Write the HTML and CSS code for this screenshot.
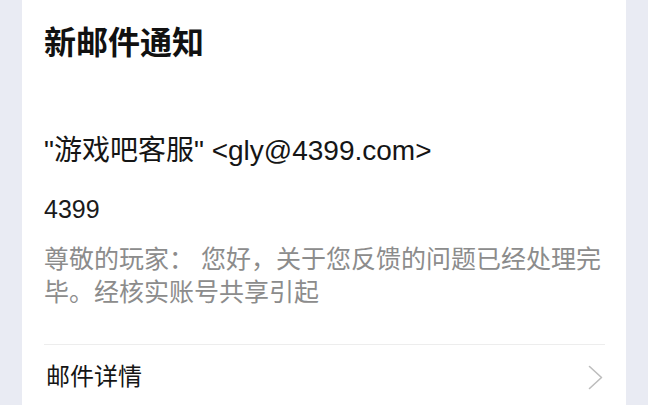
FILE: index.html
```html
<!DOCTYPE html>
<html lang="zh-CN">
<head>
<meta charset="utf-8">
<link rel="stylesheet" href="styles.css">
</head>
<body>
<div class="page">
  <div class="card">
    <h1 class="title">新邮件通知</h1>
    <div class="sender">"游戏吧客服" &lt;gly@4399.com&gt;</div>
    <div class="subject">4399</div>
    <p class="preview">尊敬的玩家： 您好，关于您反馈的问题已经处理完毕。经核实账号共享引起</p>
    <div class="detail">
      <span class="detail-label">邮件详情</span>
      <svg class="chevron" width="15" height="25" viewBox="0 0 15 25"><polyline points="1.5,1.5 13.5,12.5 1.5,23.5" fill="none" stroke="#bdbdbd" stroke-width="1.6" stroke-linecap="round" stroke-linejoin="round"/></svg>
    </div>
  </div>
</div>
</body>
</html>
```

FILE: styles.css
```css
html, body {
  margin: 0;
  padding: 0;
}
body {
  background: #e9ebf3;
  font-family: "Liberation Sans", "Noto Sans CJK SC", sans-serif;
  width: 648px;
  height: 405px;
  overflow: hidden;
}
.page {
  padding: 0 22px;
  height: 405px;
}
.card {
  background: #ffffff;
  height: 405px;
  padding: 23px 21px 0 22px;
  box-sizing: border-box;
}
.title {
  margin: 0;
  font-size: 32px;
  line-height: 40px;
  font-weight: 700;
  color: #111111;
}
.sender {
  margin-top: 70px;
  font-size: 28px;
  line-height: 36px;
  color: #151515;
}
.subject {
  margin-top: 24px;
  font-size: 25px;
  line-height: 32px;
  color: #1a1a1a;
}
.preview {
  margin: 18px 0 0;
  font-size: 25px;
  line-height: 33px;
  color: #8c8c8c;
}
.detail {
  margin-top: 35px;
  border-top: 1px solid #ededed;
  padding-top: 15px;
  display: flex;
  align-items: center;
  justify-content: space-between;
  height: 34px;
}
.detail-label {
  font-size: 24px;
  line-height: 34px;
  color: #151515;
  padding-left: 2px;
}
.chevron {
  display: block;
  margin-right: 2px;
}
```
